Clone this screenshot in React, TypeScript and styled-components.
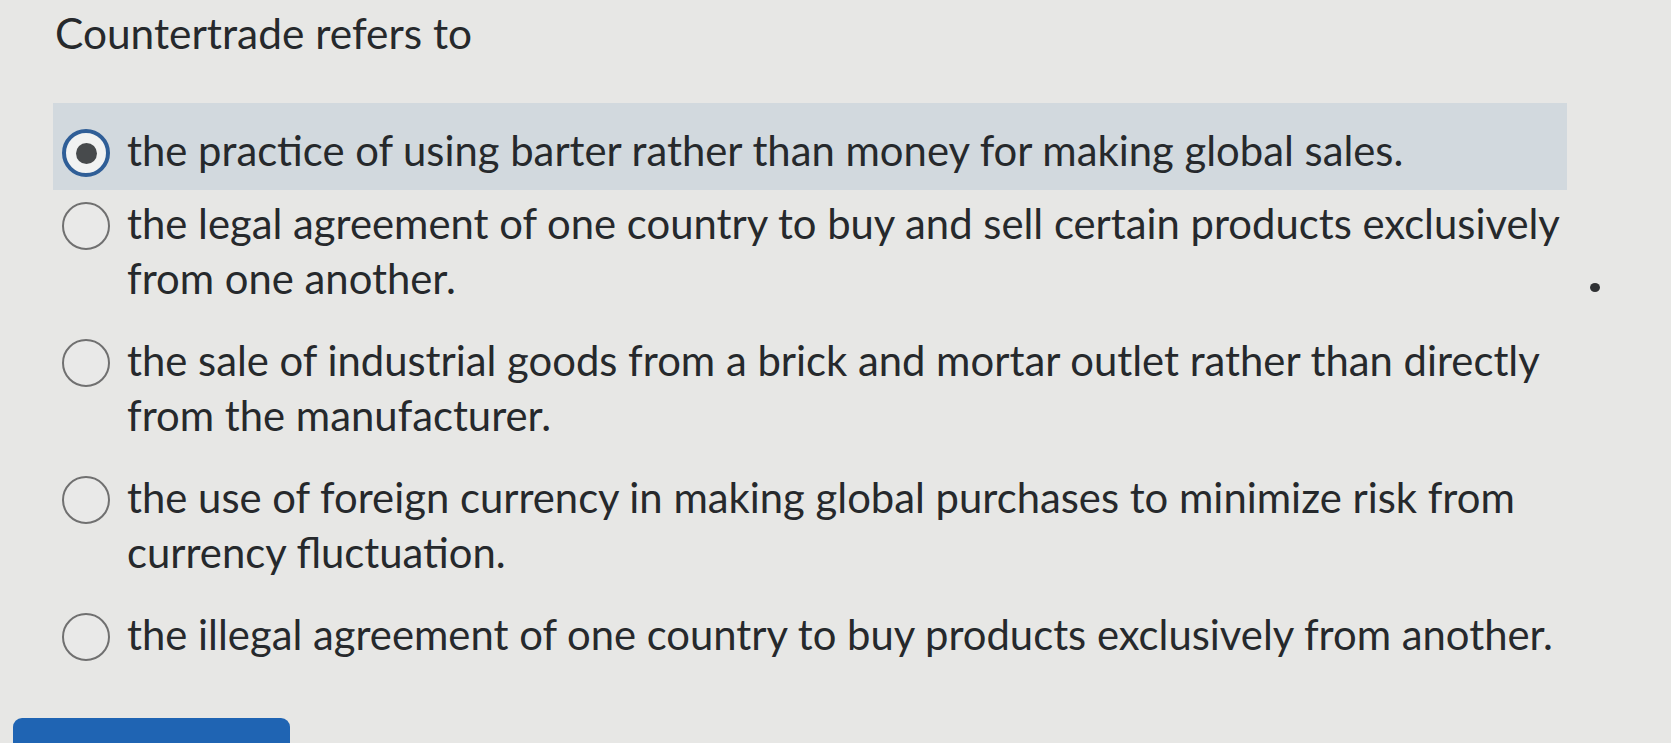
import React from "react";
import styled, { createGlobalStyle } from "styled-components";

const GlobalStyle = createGlobalStyle`
  html, body {
    margin: 0;
    padding: 0;
    background: #e7e7e5;
  }
  body {
    font-family: Lato, "Open Sans", "Liberation Sans", sans-serif;
    color: #26292c;
    overflow: hidden;
  }
`;

const Page = styled.main`
  position: relative;
  width: 1671px;
  height: 743px;
  box-sizing: border-box;
  padding: 0 0 0 13px;
  background: #e7e7e5;
  overflow: hidden;
`;

const Question = styled.section`
  padding-left: 40px;
  display: flex;
  flex-direction: column;
`;

const Prompt = styled.h1`
  margin: 8px 0 0 2px;
  font-size: 42.4px;
  font-weight: 400;
  line-height: 50px;
  color: #26292c;
`;

const Options = styled.div`
  margin-top: 45px;
  display: flex;
  flex-direction: column;
  width: 1514px;
`;

const Option = styled.label<{ $selected?: boolean }>`
  display: flex;
  align-items: flex-start;
  gap: 17px;
  padding: ${(p) => (p.$selected ? "20px 0 11px 9px" : "6px 0 20px 9px")};
  background: ${(p) => (p.$selected ? "#d2d9de" : "transparent")};
  cursor: pointer;
`;

const Radio = styled.span<{ $selected?: boolean }>`
  flex: none;
  box-sizing: border-box;
  width: 48px;
  height: 48px;
  margin-top: 6px;
  border-radius: 50%;
  border: ${(p) => (p.$selected ? "4px solid #2f5e97" : "2.5px solid #707070")};
  background: ${(p) => (p.$selected ? "#f1f2f2" : "#e9e9e8")};
  display: flex;
  align-items: center;
  justify-content: center;
`;

const Dot = styled.span`
  width: 21px;
  height: 21px;
  border-radius: 50%;
  background: #474a4c;
`;

const Label = styled.span`
  font-size: 41.8px;
  line-height: 55.5px;
  color: #26292c;
  white-space: nowrap;
`;

const Line = styled.span`
  display: block;
`;

const Footer = styled.div`
  margin-top: 36px;
`;

const SubmitButton = styled.button`
  display: block;
  width: 277px;
  height: 60px;
  border: none;
  border-radius: 9px;
  background: #1f64b3;
`;

const Speck = styled.span`
  position: absolute;
  left: 1590px;
  top: 283px;
  width: 10px;
  height: 9px;
  border-radius: 50%;
  background: #2f3133;
`;

const options: { lines: string[]; selected?: boolean }[] = [
  {
    lines: ["the practice of using barter rather than money for making global sales."],
    selected: true,
  },
  {
    lines: [
      "the legal agreement of one country to buy and sell certain products exclusively",
      "from one another.",
    ],
  },
  {
    lines: [
      "the sale of industrial goods from a brick and mortar outlet rather than directly",
      "from the manufacturer.",
    ],
  },
  {
    lines: [
      "the use of foreign currency in making global purchases to minimize risk from",
      "currency fluctuation.",
    ],
  },
  {
    lines: ["the illegal agreement of one country to buy products exclusively from another."],
  },
];

export default function App() {
  return (
    <>
      <GlobalStyle />
      <Page>
        <Question>
          <Prompt>Countertrade refers to</Prompt>
          <Options role="radiogroup">
            {options.map((o, i) => (
              <Option key={i} $selected={o.selected}>
                <Radio $selected={o.selected}>{o.selected && <Dot />}</Radio>
                <Label>
                  {o.lines.map((l, j) => (
                    <Line key={j}>{l}</Line>
                  ))}
                </Label>
              </Option>
            ))}
          </Options>
        </Question>
        <Footer>
          <SubmitButton aria-label="Submit" />
        </Footer>
        <Speck />
      </Page>
    </>
  );
}
